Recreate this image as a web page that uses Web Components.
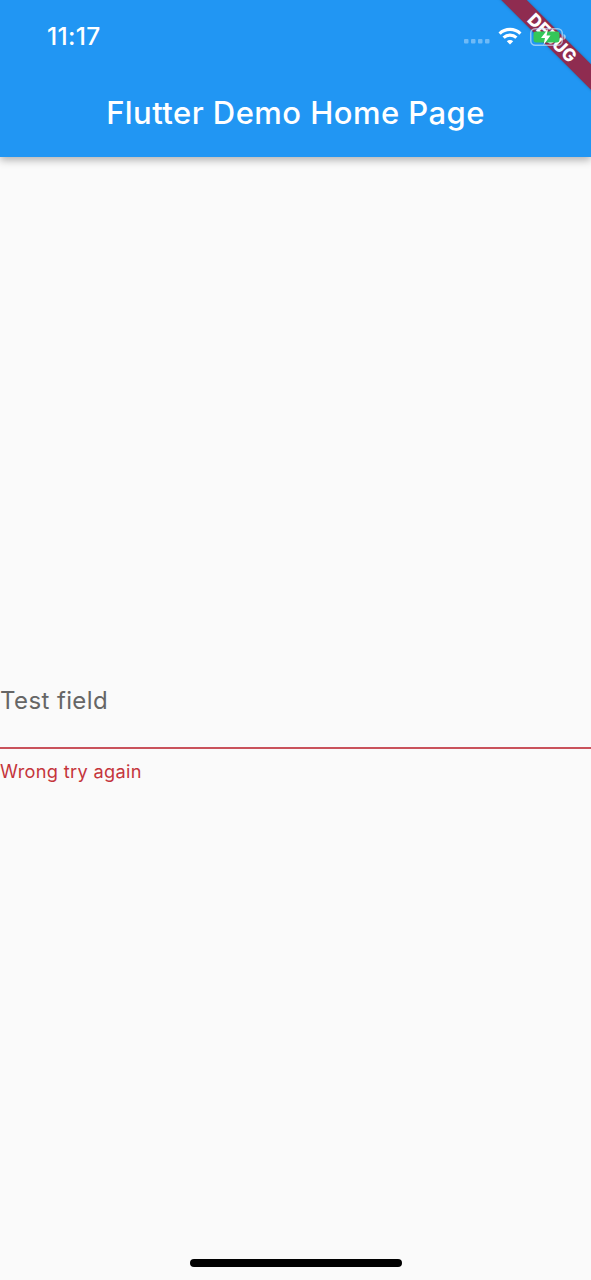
<!DOCTYPE html>
<html><head><meta charset="utf-8">
<style>
html,body{margin:0;height:100%;background:#fafafa;}
body{font-family:Inter,"Liberation Sans",sans-serif;}
</style></head>
<body>
<demo-page>
  <app-bar>
    <status-bar slot="status"></status-bar>
    Flutter Demo Home Page
  </app-bar>
  <text-field label="Test field" error="Wrong try again"></text-field>
  <home-indicator></home-indicator>
  <debug-banner label="DEBUG"></debug-banner>
</demo-page>
<script>
function def(name, html, init){
  customElements.define(name, class extends HTMLElement{
    constructor(){super();const r=this.attachShadow({mode:'open'});r.innerHTML=html;}
    connectedCallback(){if(init)init(this);}
  });
}
def('demo-page',`<style>
:host{display:grid;grid-template-rows:157px 1fr;height:1280px;width:591px;position:relative;overflow:hidden;background:#fafafa;}
</style><slot></slot>`);
def('app-bar',`<style>
:host{display:flex;flex-direction:column;background:#2196f3;color:#fff;height:157px;box-shadow:0 3px 8px rgba(0,0,0,.3);position:relative;grid-row:1;}
.title{height:84px;display:flex;align-items:center;justify-content:center;font-size:31px;font-weight:500;letter-spacing:.45px;padding-bottom:5px;box-sizing:border-box;}
</style><slot name="status"></slot><div class="title"><slot></slot></div>`);
def('status-bar',`<style>
:host{display:flex;align-items:center;height:73px;box-sizing:border-box;padding:0 26px 0 47px;position:relative;z-index:2;}
.time{font-size:24.500px;font-weight:500;letter-spacing:.35px;flex:1;color:#fff;margin-top:-1px;}
.icons{display:flex;align-items:center;}
svg{display:block}
</style><div class="time">11:17</div><div class="icons">
<svg width="26" height="5" viewBox="0 0 26 5" style="margin-top:10px;margin-right:8px" fill="#fff" opacity=".35"><rect width="4.500" height="4.500" rx="1"/><rect x="7" width="4.500" height="4.500" rx="1"/><rect x="14" width="4.500" height="4.500" rx="1"/><rect x="21" width="4.500" height="4.500" rx="1"/></svg>
<svg width="24" height="18" viewBox="0 0 24 18" fill="none" stroke="#fff" stroke-width="3.200" style="margin-right:8px;margin-top:-1px"><path d="M1.600 6.600a15 15 0 0 1 20.800 0"/><path d="M5.600 10.600a9.400 9.400 0 0 1 12.800 0"/><path d="M12 17.600l-3.200-3.400a4.600 4.600 0 0 1 6.400 0z" fill="#fff" stroke="none"/></svg>
<svg width="36" height="18" viewBox="0 0 36 18" style="margin-right:-1px"><rect x=".75" y=".75" width="31.500" height="16.500" rx="4.500" fill="none" stroke="#cfe6fa" stroke-opacity=".65" stroke-width="1.500"/><rect x="3.500" y="3.500" width="26" height="11" rx="2.400" fill="#34c759"/><path d="M33.500 6v6c1.400-.4 2.300-1.600 2.300-3s-.9-2.600-2.300-3z" fill="#fff" fill-opacity=".55"/><path d="M18 1 11 10h4l-1.500 7 7-9.500h-4z" fill="#fff"/></svg>
</div>`);
def('text-field',`<style>
:host{display:flex;flex-direction:column;justify-content:center;grid-row:2;font-size:24px;padding-top:24px;}
.box{height:71px;display:flex;align-items:center;box-sizing:border-box;color:#666;border-bottom:2px solid #c9525b;letter-spacing:.4px;padding-bottom:25px;margin-top:-1px}
.err{color:#c5353c;font-size:18.200px;letter-spacing:.32px;margin-top:12px;height:21px;line-height:21px;}
</style><div class="box" id="l"></div><div class="err" id="e"></div>`,
el=>{el.shadowRoot.getElementById('l').textContent=el.getAttribute('label');el.shadowRoot.getElementById('e').textContent=el.getAttribute('error');});
def('home-indicator',`<style>
:host{position:absolute;left:190px;top:1259px;width:212px;height:8px;border-radius:4px;background:#000;display:block;}
</style>`);
def('debug-banner',`<style>
:host{position:absolute;top:0;right:0;width:120px;height:120px;overflow:hidden;display:block;z-index:1;pointer-events:none;}
.r{position:absolute;left:-19px;top:28.500px;width:200px;height:18px;text-align:center;transform:rotate(45deg);color:#fff;background:#8f2c50;box-shadow:0 0 3px rgba(0,0,0,.25);font:800 17.500px/18px Inter,"Liberation Sans",sans-serif;}
</style><div class="r" id="t"></div>`,
el=>{el.shadowRoot.getElementById('t').textContent=el.getAttribute('label')||'';});
</script>
</body></html>
